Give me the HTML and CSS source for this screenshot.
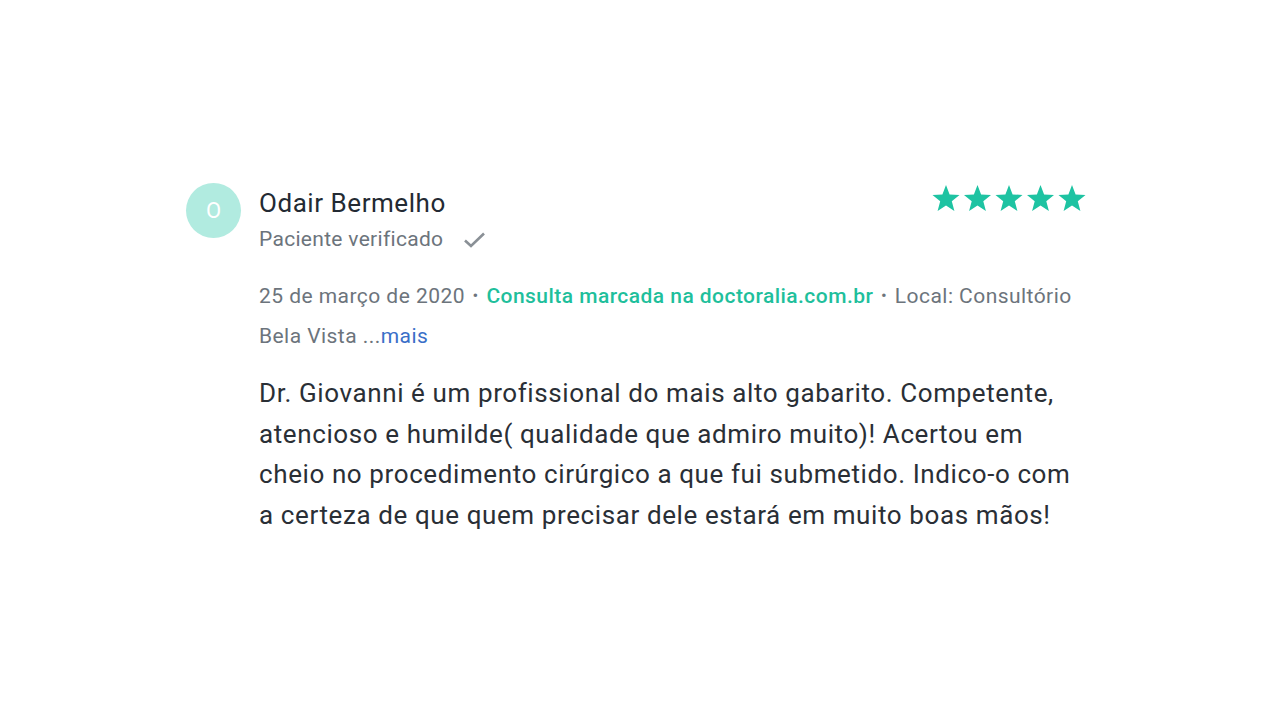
FILE: index.html
```html
<!DOCTYPE html>
<html lang="pt-BR">
<head>
<meta charset="utf-8">
<link rel="stylesheet" href="styles.css">
</head>
<body>
<div class="review">
  <div class="avatar">O</div>
  <div class="main">
    <div class="head">
      <div class="who">
        <div class="name">Odair Bermelho</div>
        <div class="verified">Paciente verificado
          <svg class="check" width="24" height="18" viewBox="0 0 24 18"><path d="M2 9.5 L8 15 L21 2.5" fill="none" stroke="#8a9096" stroke-width="2.6"/></svg>
        </div>
      </div>
      <div class="stars">
        <svg width="154" height="30" viewBox="0 0 154 30">
          <defs><path id="s" d="M14 1 L17.6 10.4 L27.5 10.9 L19.8 17.2 L22.4 26.9 L14 21.5 L5.6 26.9 L8.2 17.2 L0.5 10.9 L10.4 10.4 Z"/></defs>
          <use href="#s" x="0" fill="#1ec3a2"/>
          <use href="#s" x="31.5" fill="#1ec3a2"/>
          <use href="#s" x="63" fill="#1ec3a2"/>
          <use href="#s" x="94.5" fill="#1ec3a2"/>
          <use href="#s" x="126" fill="#1ec3a2"/>
        </svg>
      </div>
    </div>
    <p class="meta">25 de março de 2020 <span class="dot">•</span> <span class="src">Consulta marcada na doctoralia.com.br</span> <span class="dot">•</span> Local: Consultório Bela Vista ...<span class="more">mais</span></p>
    <p class="body">Dr. Giovanni é um profissional do mais alto gabarito. Competente, atencioso e humilde( qualidade que admiro muito)! Acertou em cheio no procedimento cirúrgico a que fui submetido. Indico-o com a certeza de que quem precisar dele estará em muito boas mãos!</p>
  </div>
</div>
</body>
</html>
```

FILE: styles.css
```css
html, body {
  margin: 0;
  padding: 0;
  background: #ffffff;
}
body {
  font-family: Roboto, "Noto Sans", Arial, sans-serif;
  color: #2a2f36;
}
.review {
  display: flex;
  gap: 18px;
  width: 900px;
  margin-left: 186px;
  padding-top: 183px;
}
.avatar {
  flex: none;
  width: 55px;
  height: 55px;
  border-radius: 50%;
  background: #b1ebe0;
  color: #ffffff;
  font-size: 22px;
  display: flex;
  align-items: center;
  justify-content: center;
}
.main {
  flex: 1;
  min-width: 0;
}
.head {
  display: flex;
  justify-content: space-between;
  align-items: flex-start;
}
.name {
  font-size: 26px;
  letter-spacing: 0.55px;
  line-height: 38px;
  color: #232a33;
  margin-top: 1px;
}
.verified {
  font-size: 21px;
  letter-spacing: 0.3px;
  line-height: 34px;
  color: #6c747c;
  display: flex;
  align-items: center;
  gap: 20px;
}
.check {
  margin-top: 2px;
}
.stars {
  display: flex;
  margin-top: 1px;
}
.meta {
  margin: 19px 0 0;
  font-size: 21px;
  letter-spacing: 0.45px;
  line-height: 40px;
  color: #6c747c;
  padding-right: 6px;
}
.dot {
  font-size: 17px;
  vertical-align: 2px;
  margin: 0 2px;
}
.src {
  color: #1fbf9c;
  font-weight: 500;
}
.more {
  color: #3a6fc8;
}
.body {
  margin: 17px 0 0;
  padding-right: 8px;
  font-size: 26px;
  letter-spacing: 0.6px;
  line-height: 40.7px;
  color: #2a2f36;
}
```
